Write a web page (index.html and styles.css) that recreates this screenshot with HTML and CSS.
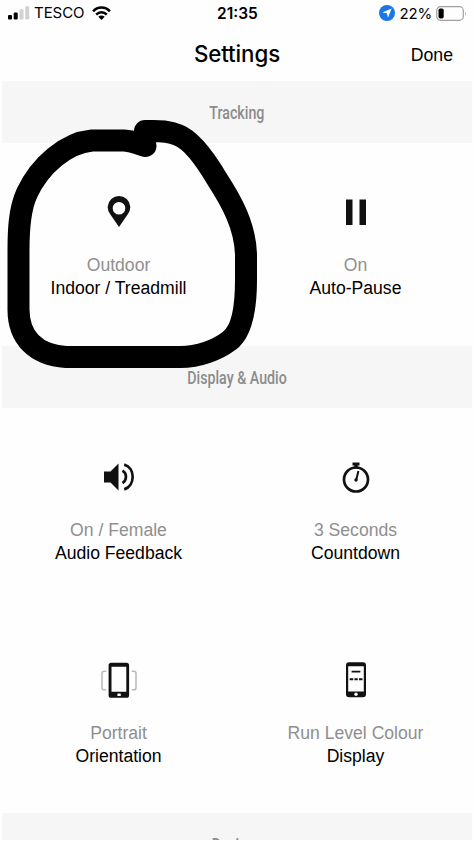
FILE: index.html
```html
<!DOCTYPE html>
<html lang="en">
<head>
<meta charset="utf-8">
<title>Settings</title>
<link rel="stylesheet" href="styles.css">
</head>
<body>
<div class="screen">
  <header class="status">
    <div class="carrier">
      <svg width="22" height="14" viewBox="0 0 22 14"><rect x="0" y="9" width="4" height="4.5" rx="1"/><rect x="5.7" y="6.5" width="4" height="7" rx="1"/><g fill="#d2d2d2"><rect x="11.5" y="3.3" width="4" height="10.2" rx="1"/><rect x="17.2" y="0.3" width="4" height="13.2" rx="1"/></g></svg>
      <span class="carrier-name">TESCO</span>
      <svg class="wifi" width="19" height="14" viewBox="0 0 19 14"><g fill="none" stroke="#000" stroke-width="2.5"><path d="M1.1 5.3C5.8 0.3 13.2 0.3 17.9 5.3"/><path d="M4.2 8.6C7.2 5.4 11.8 5.4 14.8 8.6"/></g><path d="M6.3 10.7Q9.5 8.2 12.7 10.7L9.5 14Z"/></svg>
    </div>
    <span class="time">21:35</span>
    <div class="power">
      <svg width="16" height="16" viewBox="0 0 16 16"><circle cx="8" cy="8" r="8" fill="#1777e6"/><path d="M12.6 3.5L9 12.7L7.9 8.3L3.3 7.5Z" fill="#fff"/></svg>
      <span class="percent">22%</span>
      <svg width="31" height="15" viewBox="0 0 31 15"><rect x="0.7" y="0.7" width="26.6" height="13.6" rx="3.8" fill="none" stroke="#a0a0a0" stroke-width="1.2"/><rect x="2.5" y="2.5" width="5.2" height="10" rx="1.8"/><path d="M29 5.2Q30.4 7.5 29 9.8Z" fill="#999"/></svg>
    </div>
  </header>
  <nav class="titlebar">
    <h1 class="title">Settings</h1>
    <span class="done">Done</span>
  </nav>
  <h2 class="band"><span class="band-text">Tracking</span></h2>
  <section class="grid first">
    <div class="tile">
      <svg class="icon" width="36" height="36" viewBox="0 0 36 36"><path fill-rule="evenodd" d="M18 33L9.2 20.3A11.3 11.3 0 1 1 26.8 20.3ZM18 7.9a6.3 6.3 0 1 0 0 12.6a6.3 6.3 0 0 0 0-12.6Z"/></svg>
      <span class="value">Outdoor</span><span class="label">Indoor / Treadmill</span>
    </div>
    <div class="tile">
      <svg class="icon" width="36" height="36" viewBox="0 0 36 36"><path d="M8 5.500h6.500v25.500H8zM21.500 5.500H28v25.500h-6.500z"/></svg>
      <span class="value">On</span><span class="label">Auto-Pause</span>
    </div>
  </section>
  <h2 class="band"><span class="band-text">Display &amp; Audio</span></h2>
  <section class="grid second">
    <div class="tile">
      <svg class="icon" width="36" height="36" viewBox="0 0 36 36"><path d="M3 12.500h6.500L17.500 4.500v27L9.500 23.500H3z"/><g fill="none" stroke="#111" stroke-width="2.7"><path d="M21.500 11.700A7.200 7.200 0 0 1 21.500 24"/><path d="M23.200 5.600C34.500 8.800 34.500 26.800 23.200 30.400"/></g></svg>
      <span class="value">On / Female</span><span class="label">Audio Feedback</span>
    </div>
    <div class="tile">
      <svg class="icon" width="36" height="36" viewBox="0 0 36 36"><circle cx="18" cy="20.500" r="12" fill="none" stroke="#111" stroke-width="2.700"/><path d="M14.500 3.500h7v3h-1.800v3h-3.400v-3h-1.800z"/><path d="M18.200 21L20.400 12" fill="none" stroke="#111" stroke-width="2"/><circle cx="18" cy="21" r="1.700"/></svg>
      <span class="value">3 Seconds</span><span class="label">Countdown</span>
    </div>
    <div class="tile">
      <svg class="icon" width="40" height="36" viewBox="0 0 40 36"><path fill-rule="evenodd" d="M12 0.800h15.500a2.600 2.600 0 0 1 2.600 2.600v29.800a2.600 2.600 0 0 1-2.600 2.600H12.200a2.600 2.600 0 0 1-2.600-2.600v-29.800a2.600 2.600 0 0 1 2.600-2.600ZM12.500 4.700v25h14.800v-25Z"/><rect x="18.400" y="31.400" width="3.400" height="2.700" rx="0.700" fill="#fff"/><path d="M7.300 9.200H5.200Q3 9.200 3 11.400v14Q3 27.800 5.200 27.800h2.100M32.700 9.200h2.100Q37 9.200 37 11.400v14Q37 27.800 34.800 27.800h-2.100" fill="none" stroke="#bcbcbc" stroke-width="1.600"/></svg>
      <span class="value">Portrait</span><span class="label">Orientation</span>
    </div>
    <div class="tile">
      <svg class="icon" width="40" height="36" viewBox="0 0 40 36"><path fill-rule="evenodd" d="M13 0.200h14a3 3 0 0 1 3 3v29.100a3 3 0 0 1-3 3H13a3 3 0 0 1-3-3V3.200a3 3 0 0 1 3-3ZM12.200 4.200v25.200h15.600V4.200Z"/><circle cx="20" cy="32.200" r="1.700" fill="#fff"/><path d="M15.600 9.600h8.800M13.700 17.200h3.500M18.400 17.200h3.400M23 17.200h3.500" fill="none" stroke="#111" stroke-width="1.900"/></svg>
      <span class="value">Run Level Colour</span><span class="label">Display</span>
    </div>
  </section>
  <h2 class="band last"><span class="band-text">Devices</span></h2>
  <svg class="marker" width="474" height="842" viewBox="0 0 474 842"><path d="M145.500 146C137 144 134 141 124 140.500H92C66 143 40 165 27 193C19 210 18.500 232 18.500 250V308C18 338 36 355 66 357H180C199 357 217 350 229 341C243 331 246 305 246 280V254C245 226 232 202 217 179C204 157 191 140 178 135C167 130 157 131 145 131"/></svg>
</div>
</body>
</html>
```
FILE: styles.css
```css
* { box-sizing: border-box; }
body { margin: 0; background: #fefefe; color: #000; font-family: "Liberation Sans", Arial, sans-serif; }
.screen { position: relative; width: 474px; height: 842px; overflow: hidden; }
svg { display: block; flex: none; }
.status { display: grid; grid-template-columns: 1fr auto 1fr; height: 26px; padding: 0 7px 0 8px; align-items: center; font-family: Inter, sans-serif; }
.carrier, .power { display: flex; align-items: center; }
.carrier-name { margin-left: 4px; font-size: 15px; line-height: 26px; letter-spacing: -0.05px; }
.wifi { margin-left: 7px; }
.time { font-size: 15.5px; font-weight: 600; }
.power { justify-content: flex-end; }
.percent { margin: 0 4px 0 5px; font-size: 15px; letter-spacing: -0.2px; }
.titlebar { display: grid; grid-template-columns: 1fr auto 1fr; align-items: center; height: 55px; padding: 0 21px; }
.title { grid-column: 2; margin: 0; font: 500 22.3px/54px Inter, sans-serif; letter-spacing: -0.1px; }
.done { justify-self: end; font-size: 17.7px; padding-top: 4px; }
.band { display: flex; justify-content: center; height: 62px; margin: 0 2px; background: #f6f6f6; color: #8b8b8b; font: 500 18px/63px Roboto, sans-serif; }
.band-text { display: block; white-space: nowrap; transform: scaleX(0.79); }
.grid { display: grid; grid-template-columns: 1fr 1fr; }
.first { height: 203px; padding-top: 51px; }
.second { height: 405px; padding-top: 51px; grid-auto-rows: 203px; }
.tile { display: flex; flex-direction: column; align-items: center; font-size: 17.6px; line-height: 23px; }
.icon { fill: #111; margin-bottom: 24px; }
.value { color: #8f8f8f; }
.last { height: 27px; overflow: hidden; }
.marker { position: absolute; inset: 0; fill: none; stroke: #000; stroke-width: 22; stroke-linecap: round; stroke-linejoin: round; }
```
